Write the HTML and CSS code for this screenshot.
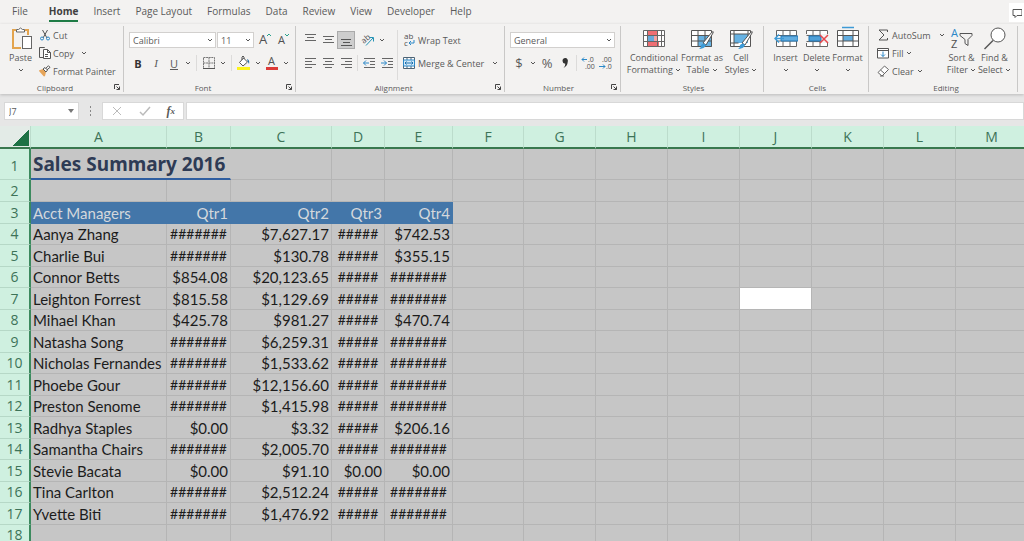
FILE: index.html
```html
<!DOCTYPE html>
<html lang="en">
<head>
  <meta charset="UTF-8" />
  <meta name="viewport" content="width=device-width, initial-scale=1.0"/>
  <title>Sales Summary 2016</title>
  <link rel="stylesheet" href="styles.css">
</head>
<body>

<!-- shared icons -->
<svg class="defs" aria-hidden="true">
  <symbol id="chev" viewBox="0 0 6 6"><path d="M1 2l2 2 2-2" fill="none" stroke="#555" stroke-width="1"/></symbol>
  <symbol id="launch" viewBox="0 0 8 8"><path d="M1.5 6V1.500H6M3.500 3.500l3 3M6.500 3.500v3h-3" fill="none" stroke="#444" stroke-width="1"/></symbol>
</svg>

<nav class="tabs">
  <a href="#" class="tab tab-file">File</a>
  <a href="#" class="tab active">Home</a>
  <a href="#" class="tab">Insert</a>
  <a href="#" class="tab">Page Layout</a>
  <a href="#" class="tab">Formulas</a>
  <a href="#" class="tab">Data</a>
  <a href="#" class="tab">Review</a>
  <a href="#" class="tab">View</a>
  <a href="#" class="tab">Developer</a>
  <a href="#" class="tab">Help</a>
  <button class="btn-comments" aria-label="Comments">
    <svg width="10" height="10" viewBox="0 0 10 10"><path d="M1 1.500h9v6H5l-2 2v-2H1z" fill="none" stroke="#555"/></svg>
  </button>
</nav>

<div class="ribbon">
  <section class="group clipboard">
    <div class="tools">
      <button class="big">
        <svg width="24" height="24" viewBox="0 0 24 24">
          <path d="M7 4H4v18h8M16 4h3v5" fill="none" stroke="#e3a44e" stroke-width="2"/>
          <path d="M7.500 6V3.500h2q2-3 4 0h2V6z" fill="#fff" stroke="#666"/>
          <rect x="13.500" y="10.500" width="9" height="12" fill="#fff" stroke="#666"/>
        </svg>
        <span>Paste</span>
        <svg class="chev"><use href="#chev"/></svg>
      </button>
      <div class="stack">
        <button class="row">
          <svg width="12" height="12" viewBox="0 0 12 12">
            <path d="M3.500 1l4.500 8M8.500 1L4 9" fill="none" stroke="#555"/>
            <circle cx="3" cy="9.500" r="1.500" fill="none" stroke="#2b88c8"/><circle cx="9" cy="9.500" r="1.500" fill="none" stroke="#2b88c8"/>
          </svg>Cut
        </button>
        <button class="row">
          <svg width="12" height="12" viewBox="0 0 12 12">
            <path d="M4 10.500H.5v-10h5L6 1" fill="none" stroke="#555"/>
            <path d="M4.500 2.500h4l3 3v6h-7zM8.500 2.500v3h3M6 7.500h3M6 9.500h3" fill="#fff" stroke="#555"/>
          </svg>Copy<svg class="chev chev-far"><use href="#chev"/></svg>
        </button>
        <button class="row">
          <svg width="12" height="12" viewBox="0 0 12 12">
            <path d="M1 5l3-1 3 3-1 4q-1 1-2-.5L0 6q0-1 1-1z" fill="#e6a55a"/>
            <path d="M4 4l2-1.500L8.500 5 7 7zM6.500 3.500L9.500.8l1.500 1.500-3 2.500" fill="#fff" stroke="#555"/>
          </svg>Format Painter
        </button>
      </div>
    </div>
    <footer><span>Clipboard</span><button class="launch" aria-label="Clipboard options"><svg><use href="#launch"/></svg></button></footer>
  </section>

  <section class="group font">
    <div class="tools lines">
      <div class="line">
        <select class="sel-font" aria-label="Font"><option>Calibri</option></select>
        <select class="sel-size" aria-label="Font size"><option>11</option></select>
        <button class="ico" aria-label="Increase font size"><svg viewBox="0 0 18 18"><text x="3" y="13" class="glyph" font-size="13">A</text><path d="M11 5l2-2 2 2" fill="none" stroke="#26a08b"/></svg></button>
        <button class="ico" aria-label="Decrease font size"><svg viewBox="0 0 18 18"><text x="4" y="13" class="glyph" font-size="11">A</text><path d="M11 3l2 2 2-2" fill="none" stroke="#26a08b"/></svg></button>
      </div>
      <div class="line">
        <button class="ico bold">B</button>
        <button class="ico italic">I</button>
        <button class="ico underline">U</button>
        <button class="drop" aria-label="Underline style"><svg class="chev"><use href="#chev"/></svg></button>
        <i class="sep"></i>
        <button class="ico" aria-label="Borders"><svg viewBox="0 0 18 18"><path d="M3.500 3.500h11v11h-11zM9 3.500v11M3.500 9h11" fill="none" stroke="#777" stroke-dasharray="2 .6"/><path d="M3 14.500h12" stroke="#555"/></svg></button>
        <button class="drop" aria-label="Border style"><svg class="chev"><use href="#chev"/></svg></button>
        <i class="sep"></i>
        <button class="ico" aria-label="Fill colour"><svg viewBox="0 0 18 18"><path d="M4.500 8.500l4-4.500 4 4-4.500 4zM7 6V3q1-2 2 0v2" fill="#fff" stroke="#555"/><path d="M12 5q3 1 2 5l-1-2z" fill="#1f6fa5"/><path d="M2 13h13v3H2z" fill="#fcf41c"/></svg></button>
        <button class="drop" aria-label="Fill options"><svg class="chev"><use href="#chev"/></svg></button>
        <button class="ico" aria-label="Font colour"><svg viewBox="0 0 18 18"><text x="5" y="11" class="glyph" font-size="11">A</text><path d="M3 13h12v3H3z" fill="#dc3b38"/></svg></button>
        <button class="drop" aria-label="Font colour options"><svg class="chev"><use href="#chev"/></svg></button>
      </div>
    </div>
    <footer><span>Font</span><button class="launch" aria-label="Font options"><svg><use href="#launch"/></svg></button></footer>
  </section>

  <section class="group alignment">
    <div class="tools">
      <div class="lines">
        <div class="line">
          <button class="ico" aria-label="Top align"><svg viewBox="0 0 18 18"><path d="M4 3.500h11M6 6.500h7M4 9.500h11" stroke="#666"/></svg></button>
          <button class="ico" aria-label="Middle align"><svg viewBox="0 0 18 18"><path d="M4 5.500h11M6 8.500h7M4 11.500h11" stroke="#666"/></svg></button>
          <button class="ico pressed" aria-label="Bottom align"><svg viewBox="0 0 18 18"><path d="M4 8.500h10M6 11.500h7M4 14.500h11" stroke="#555"/></svg></button>
          <button class="ico orient" aria-label="Orientation"><svg viewBox="0 0 18 18"><text x="3" y="10" class="glyph" font-size="8" transform="rotate(-40 8 9)">ab</text><path d="M7 14.500L14 7M10.500 6.500h4v4" fill="none" stroke="#2593b5"/></svg></button>
          <button class="drop" aria-label="Orientation options"><svg class="chev"><use href="#chev"/></svg></button>
        </div>
        <div class="line">
          <button class="ico" aria-label="Align left"><svg viewBox="0 0 18 18"><path d="M4 4.500h11M4 7.500h7M4 10.500h11M4 13.500h7" stroke="#666"/></svg></button>
          <button class="ico" aria-label="Center"><svg viewBox="0 0 18 18"><path d="M4 4.500h11M6 7.500h7M4 10.500h11M6 13.500h7" stroke="#666"/></svg></button>
          <button class="ico" aria-label="Align right"><svg viewBox="0 0 18 18"><path d="M4 4.500h11M8 7.500h7M4 10.500h11M8 13.500h7" stroke="#666"/></svg></button>
          <i class="sep thin"></i>
          <button class="ico" aria-label="Decrease indent"><svg viewBox="0 0 18 18"><path d="M4 4.500h11M10 7.500h5M10 10.500h5M4 13.500h11" stroke="#666"/><path d="M3.500 9H9M6 6.500L3.500 9 6 11.500" fill="none" stroke="#2b88c8"/></svg></button>
          <button class="ico" aria-label="Increase indent"><svg viewBox="0 0 18 18"><path d="M4 4.500h11M10 7.500h5M10 10.500h5M4 13.500h11" stroke="#666"/><path d="M3 9h5.500M6 6.500L8.500 9 6 11.500" fill="none" stroke="#2b88c8"/></svg></button>
        </div>
      </div>
      <i class="sep tall"></i>
      <div class="lines">
        <div class="line">
          <button class="row"><svg width="12" height="14" viewBox="0 0 12 14"><text x="1" y="6" class="glyph" font-size="8">ab</text><text x="1" y="13" class="glyph" font-size="8">c</text><path d="M11 7v3H6M8 8l-2 2 2 2" fill="none" stroke="#2b88c8"/></svg>Wrap Text</button>
        </div>
        <div class="line">
          <button class="row"><svg width="12" height="12" viewBox="0 0 12 12"><path d="M.5.500h11v11H.5zM4 .5V3M8 .5V3M4 9v3M8 9v3" fill="#fff" stroke="#4c6477"/><path d="M.5 3h11v6H.5z" fill="#d4eaf8" stroke="#2b88c8"/><path d="M2 6h8M3.500 4.500L2 6l1.500 1.500M8.500 4.500L10 6 8.500 7.500" fill="none" stroke="#1a71b0"/></svg>Merge &amp; Center<svg class="chev chev-far"><use href="#chev"/></svg></button>
        </div>
      </div>
    </div>
    <footer><span>Alignment</span><button class="launch" aria-label="Alignment options"><svg><use href="#launch"/></svg></button></footer>
  </section>

  <section class="group number">
    <div class="tools lines">
      <div class="line">
        <select class="sel-number" aria-label="Number format"><option>General</option></select>
      </div>
      <div class="line">
        <button class="ico symbol">$</button>
        <button class="drop" aria-label="Currency"><svg class="chev"><use href="#chev"/></svg></button>
        <button class="ico symbol">%</button>
        <button class="ico" aria-label="Comma style"><svg viewBox="0 0 18 18"><path d="M6.500 7a2.700 2.700 0 1 1 5.300.5Q11.500 12 7.500 14q2-2.200 1.800-4.200Q6.600 9.500 6.500 7z" fill="#333"/></svg></button>
        <i class="sep thin"></i>
        <button class="ico" aria-label="Increase decimal"><svg viewBox="0 0 18 18"><text x="9" y="8" class="glyph" font-size="7">.0</text><text x="6" y="15" class="glyph" font-size="7">.00</text><path d="M3 5.500h5M5 3.500l-2 2 2 2" fill="none" stroke="#2b88c8"/></svg></button>
        <button class="ico" aria-label="Decrease decimal"><svg viewBox="0 0 18 18"><text x="5" y="8" class="glyph" font-size="7">.00</text><text x="9" y="15" class="glyph" font-size="7">.0</text><path d="M2 12.500h6M6 10.500l2 2-2 2" fill="none" stroke="#2b88c8"/></svg></button>
      </div>
    </div>
    <footer><span>Number</span><button class="launch" aria-label="Number options"><svg><use href="#launch"/></svg></button></footer>
  </section>

  <section class="group styles">
    <div class="tools">
      <button class="big wide">
        <svg width="24" height="24" viewBox="0 0 24 24">
          <path d="M1.500 4.500h21v16h-21z" fill="#fff"/>
          <path d="M5 4h10v6H5zM5 15h12v6H5z" fill="#ee6e73"/><path d="M5 10h7v5H5z" fill="#66aadc"/><path d="M12 10h3v5h-3z" fill="#f5a3a3"/>
          <path d="M1.500 4.500h21v16h-21zM5.500 4.500v16M15.500 4.500v16M19.500 4.500v16M1.500 9.500h21M1.500 15.500h21" fill="none" stroke="#666"/>
        </svg>
        <span>Conditional</span><span>Formatting <svg class="chev"><use href="#chev"/></svg></span>
      </button>
      <button class="big">
        <svg width="24" height="24" viewBox="0 0 24 24">
          <path d="M1.500 4.500h20v16h-20z" fill="#fff"/><path d="M8 10h14v11H8z" fill="#66b2e3"/>
          <path d="M1.500 4.500h20v16h-20zM8 4.500v16M15 4.500v16M1.500 9.500h20M1.500 15h20" fill="none" stroke="#555"/>
          <path d="M13 17L22 6q2-1 1 1l-7 12z" fill="#fff" stroke="#555"/><path d="M8 23q3 0 3-4 3-3 5 0-1 4-8 4z" fill="#3d9ad6"/>
        </svg>
        <span>Format as</span><span>Table <svg class="chev"><use href="#chev"/></svg></span>
      </button>
      <button class="big cell-styles">
        <svg width="24" height="24" viewBox="0 0 24 24">
          <path d="M1.500 4.500h20v16h-20z" fill="#fff"/><path d="M5 8h14v9H5z" fill="#66b2e3"/>
          <path d="M1.500 4.500h20v16h-20zM5 4.500v16M19 4.500v6M1.500 8h20M1.500 17h8" fill="none" stroke="#555"/>
          <path d="M13 17L22 6q2-1 1 1l-7 12z" fill="#fff" stroke="#555"/><path d="M8 23q3 0 3-4 3-3 5 0-1 4-8 4z" fill="#3d9ad6"/>
        </svg>
        <span>Cell</span><span>Styles <svg class="chev"><use href="#chev"/></svg></span>
      </button>
    </div>
    <footer><span>Styles</span></footer>
  </section>

  <section class="group cells">
    <div class="tools">
      <button class="big">
        <svg width="24" height="24" viewBox="0 0 24 24">
          <path d="M2.500 4.500h20v16h-20zM9 4.500v16M16 4.500v16M2.500 9.500h20M2.500 15h20" fill="#fff" stroke="#666"/>
          <path d="M7 10h17v5H7z" fill="#62ade0" stroke="#2376b4"/><path d="M1 12.500h9M5 8.500l-4 4 4 4" fill="none" stroke="#3d9ad6" stroke-width="1.500"/>
        </svg>
        <span>Insert</span><svg class="chev"><use href="#chev"/></svg>
      </button>
      <button class="big">
        <svg width="24" height="24" viewBox="0 0 24 24">
          <path d="M22.500 8V4.500h-21V8M22.500 17v3.500h-21V17M8 4.500v16M15 4.500v16M1.500 9.500h14M1.500 15.500h14" fill="#fff" stroke="#666"/>
          <path d="M4 10h12v5H4z" fill="#4fa0d8" stroke="#2376b4"/><path d="M15 9l8 8M23 9l-8 8" stroke="#e8474c" stroke-width="1.500"/>
        </svg>
        <span>Delete</span><svg class="chev"><use href="#chev"/></svg>
      </button>
      <button class="big">
        <svg width="24" height="24" viewBox="0 0 24 24">
          <path d="M6 1.500h12" stroke="#3d9ad6" stroke-width="1.500"/>
          <path d="M1.500 4.500h21v16h-21z" fill="#fff"/><path d="M7 10h10v5H7z" fill="#62ade0"/>
          <path d="M1.500 4.500h21v16h-21zM7 4.500v16M17 4.500v16M1.500 9.500h21M1.500 15h21" fill="none" stroke="#555"/>
        </svg>
        <span>Format</span><svg class="chev"><use href="#chev"/></svg>
      </button>
    </div>
    <footer><span>Cells</span></footer>
  </section>

  <section class="group editing">
    <div class="tools">
      <div class="stack">
        <button class="row"><svg width="12" height="12" viewBox="0 0 12 12"><path d="M10.500 3V1H2l5 5-5 5h8.500V9" fill="none" stroke="#555"/></svg>AutoSum<svg class="chev chev-far"><use href="#chev"/></svg></button>
        <button class="row"><svg width="12" height="12" viewBox="0 0 12 12"><path d="M.5 1.500h11v9.500H.5zM.5 3.500h11" fill="#fff" stroke="#555"/><path d="M6 4.500v5M4 7.500l2 2 2-2" fill="none" stroke="#2b88c8"/></svg>Fill<svg class="chev"><use href="#chev"/></svg></button>
        <button class="row"><svg width="12" height="12" viewBox="0 0 12 12"><path d="M1 7.500L7.500 1l4 3.500L5 11zM3.500 5l4 3.500M3 11h4" fill="#fff" stroke="#666"/></svg>Clear<svg class="chev"><use href="#chev"/></svg></button>
      </div>
      <button class="big">
        <svg width="24" height="24" viewBox="0 0 24 24">
          <text x="1" y="11" class="glyph blue" font-size="11">A</text><text x="1" y="22" class="glyph" font-size="11">Z</text>
          <path d="M10 7.500h12v2l-4 4v6l-3-2v-4l-5-4z" fill="none" stroke="#555"/>
        </svg>
        <span>Sort &amp;</span><span>Filter <svg class="chev"><use href="#chev"/></svg></span>
      </button>
      <button class="big">
        <svg width="24" height="24" viewBox="0 0 24 24"><circle cx="15" cy="9" r="7" fill="#fff" stroke="#555"/><path d="M10 14.500L1.500 23" stroke="#555" stroke-width="1.500"/></svg>
        <span>Find &amp;</span><span>Select <svg class="chev"><use href="#chev"/></svg></span>
      </button>
    </div>
    <footer><span>Editing</span></footer>
  </section>
</div>

<div class="formula-bar">
  <div class="name-box">
    <input type="text" value="J7" aria-label="Name box">
    <button class="name-drop" aria-label="Show names"><svg width="6" height="4" viewBox="0 0 6 4"><path d="M0 0h6L3 4z" fill="#777"/></svg></button>
  </div>
  <svg class="grip" width="3" height="12" viewBox="0 0 3 12"><path d="M1 1h1v2H1zM1 5h1v2H1zM1 9h1v2H1z" fill="#888"/></svg>
  <div class="fx-buttons">
    <button aria-label="Cancel"><svg width="12" height="12" viewBox="0 0 12 12"><path d="M2 2l8 8M10 2l-8 8" stroke="#bbb"/></svg></button>
    <button aria-label="Enter"><svg width="12" height="12" viewBox="0 0 12 12"><path d="M1 7l3 3 7-8" fill="none" stroke="#bbb" stroke-width="1.500"/></svg></button>
    <button class="fx">f<sub>x</sub></button>
  </div>
  <input type="text" class="formula" aria-label="Formula">
</div>

<main class="sheet">
  <table>
    <colgroup id="cols"></colgroup>
    <thead><tr id="letters"></tr></thead>
    <tbody id="grid"></tbody>
  </table>
</main>

<script>
  const letters = 'ABCDEFGHIJKLM'.split('');
  // columns that are too narrow for their number
  const W = '#######', N = '#####';
  const rows = [
    ['Sales Summary 2016'],
    [],
    ['Acct Managers', 'Qtr1', 'Qtr2', 'Qtr3', 'Qtr4'],
    ['Aanya Zhang', W, '$7,627.17', N, '$742.53'],
    ['Charlie Bui', W, '$130.78', N, '$355.15'],
    ['Connor Betts', '$854.08', '$20,123.65', N, W],
    ['Leighton Forrest', '$815.58', '$1,129.69', N, W],
    ['Mihael Khan', '$425.78', '$981.27', N, '$470.74'],
    ['Natasha Song', W, '$6,259.31', N, W],
    ['Nicholas Fernandes', W, '$1,533.62', N, W],
    ['Phoebe Gour', W, '$12,156.60', N, W],
    ['Preston Senome', W, '$1,415.98', N, W],
    ['Radhya Staples', '$0.00', '$3.32', N, '$206.16'],
    ['Samantha Chairs', W, '$2,005.70', N, W],
    ['Stevie Bacata', '$0.00', '$91.10', '$0.00', '$0.00'],
    ['Tina Carlton', W, '$2,512.24', N, W],
    ['Yvette Biti', W, '$1,476.92', N, W],
    []
  ];

  let cols = '<col class="col-num">', head = '<th class="corner"></th>';
  letters.forEach(l => {
    cols += `<col class="col-${l.toLowerCase()}">`;
    head += `<th scope="col">${l}</th>`;
  });
  document.getElementById('cols').innerHTML = cols;
  document.getElementById('letters').innerHTML = head;

  const grid = document.getElementById('grid');
  rows.forEach((row, r) => {
    const tr = document.createElement('tr');
    if (r === 0) tr.className = 'title-row';
    if (r === 2) tr.className = 'head-row';
    let html = `<th scope="row">${r + 1}</th>`;
    letters.forEach((l, c) => {
      if (r === 0 && c === 0) { html += `<td colspan="2" class="title">${row[0]}</td>`; return; }
      if (r === 0 && c === 1) return;
      const text = row[c] || '';
      let cls = '';
      if (text[0] === '#') cls = ' class="hashes"';
      if (l === 'J' && r === 6) cls = ' class="active"';
      html += `<td${cls}>${text}</td>`;
    });
    tr.innerHTML = html;
    grid.appendChild(tr);
  });
</script>

</body>
</html>
```
FILE: styles.css
```css
* { box-sizing: border-box; margin: 0; padding: 0; }
body {
  font-family: "Open Sans", "Noto Sans", sans-serif;
  font-size: 9px;
  color: #5a5a5a;
  background: #e6e6e6;
  height: 100vh;
  display: flex;
  flex-direction: column;
  overflow: hidden;
}
button, input, select { font: inherit; color: inherit; border: none; background: none; }
button { display: flex; align-items: center; justify-content: center; white-space: nowrap; }
svg { display: block; flex: none; }
.defs { width: 0; height: 0; position: absolute; }
.chev { width: 6px; height: 6px; display: inline-block; }
.glyph { fill: #505050; }
.glyph.blue { fill: #2b88c8; }

/* tabs */
.tabs {
  display: flex;
  align-items: stretch;
  height: 24px;
  padding: 3px 0 2px 5px;
  background: #f3f2f1;
  font-size: 10px;
}
.tab {
  margin: 0 8px 0 7px;
  line-height: 17px;
  color: #5a5a5a;
  text-decoration: none;
}
.tab-file { margin-right: 14px; }
.tab.active {
  font-weight: bold;
  color: #404040;
  border-bottom: 2px solid #1e7b45;
}
.btn-comments {
  margin-left: auto;
  width: 15px;
  background: #fff;
}

/* ribbon */
.ribbon {
  display: flex;
  height: 70px;
  padding: 2px 0 0;
  background: #f3f2f1;
  box-shadow: 0 1px 3px #bbb;
  z-index: 1;
}
.group {
  display: flex;
  flex-direction: column;
  flex: none;
  height: 66px;
  padding: 0 2px 0 5px;
  border-right: 1px solid #c9c8c7;
}
.clipboard { width: 124px; }
.font { width: 172px; }
.alignment { width: 209px; }
.number { width: 116px; }
.styles { width: 143px; }
.cells { width: 105px; }
.editing { width: 149px; padding-left: 8px; }
.tools { display: flex; flex: 1; }
.lines { display: flex; flex-direction: column; gap: 5px; padding-top: 5px; }
.line { display: flex; align-items: center; height: 18px; }
.stack { display: flex; flex-direction: column; align-items: flex-start; }
.row { height: 17px; gap: 3px; }
.chev-far { margin-left: 5px; }
.big {
  flex-direction: column;
  justify-content: flex-start;
  width: 31px;
  line-height: 12px;
}
.big > svg:first-child { margin-bottom: 2px; }
.big > .chev { margin-top: 3px; }
.clipboard .big { margin-right: 3px; }
.clipboard .row { height: 18px; gap: 2px; }
.styles .big { width: 44px; }
.styles .big.wide { width: 52px; }
.styles .big.cell-styles { width: 34px; }
.styles .tools { padding-left: 2px; }
.cells .tools { padding-left: 1px; }
.editing .big { width: 33px; }
.editing .stack { width: 68px; }
.editing .row { height: 18px; }
.ico { width: 18px; height: 18px; font-size: 11px; }
.ico svg { width: 18px; height: 18px; }
.drop { width: 10px; height: 18px; }
.bold { font-weight: bold; color: #333; }
.italic { font-style: italic; font-family: "Liberation Serif", serif; }
.underline { text-decoration: underline; }
.symbol { font-size: 13px; }
.pressed { background: #cdcdcd; border: 1px solid #aaa; }
.orient { margin-left: 4px; }
.sep { width: 1px; height: 16px; margin: 0 3px; background: #dcdbda; }
.sep.thin { margin: 0 2px; }
.sep.tall { height: 50px; margin: 4px 5px 0 1px; }

select {
  appearance: none;
  height: 16px;
  padding: 0 3px;
  border: 1px solid #d2d0ce;
  background: #fff url("data:image/svg+xml,%3Csvg xmlns='http://www.w3.org/2000/svg' width='6' height='6'%3E%3Cpath d='M1 2l2 2 2-2' fill='none' stroke='%23555'/%3E%3C/svg%3E") no-repeat right 2px center;
}
.sel-font { width: 87px; margin-right: 1px; }
.sel-size { width: 37px; margin-right: 2px; }
.sel-number { width: 105px; }

footer {
  display: flex;
  align-items: center;
  height: 10px;
  font-size: 8px;
}
footer span { flex: 1; text-align: center; }
.font footer span, .alignment footer span, .clipboard footer span { padding-right: 8px; }
.number footer span { padding-right: 3px; }
.launch, .launch svg { width: 8px; height: 8px; }

/* formula bar */
.formula-bar {
  display: flex;
  align-items: center;
  height: 32px;
  padding: 2px 0 0 4px;
}
.name-box {
  display: flex;
  width: 75px;
  height: 18px;
  padding: 0 4px;
  background: #fff;
  border: 1px solid #d8d8d8;
}
.name-box input { flex: 1; min-width: 0; }
.grip { margin: 0 10px; }
.fx-buttons {
  display: flex;
  justify-content: space-around;
  width: 82px;
  height: 18px;
  background: #fff;
  border: 1px solid #d8d8d8;
}
.fx { font: italic bold 12px "Liberation Serif", serif; }
.fx sub { font-size: 9px; }
.formula {
  flex: 1;
  height: 18px;
  margin-left: 2px;
  background: #fff;
  border: 1px solid #d8d8d8;
}

/* sheet */
.sheet { flex: 1; overflow: hidden; background: #c6c6c6; }
table {
  table-layout: fixed;
  width: 100%;
  min-width: 1028px;
  border-collapse: separate;
  border-spacing: 0;
  font-family: Lato, "Noto Sans", sans-serif;
  font-size: 15px;
  line-height: 20px;
}
col { width: 72px; }
.col-num { width: 31px; }
.col-a { width: 136px; }
.col-b { width: 64px; }
.col-c { width: 101px; }
.col-d { width: 53px; }
.col-e { width: 68px; }
.col-f { width: 71px; }
.col-m { width: auto; }
th {
  font-family: "Open Sans", "Noto Sans", sans-serif;
  font-size: 14px;
  font-weight: normal;
  color: #3d7358;
  background: #cff0e0;
}
thead th {
  height: 23px;
  padding-top: 1px;
  border-right: 1px solid #bcdccc;
  border-bottom: 2px solid #39784f;
}
.corner {
  background: linear-gradient(135deg, #e3ebe7 50%, #1e7145 50%) no-repeat right 1px bottom 1px / 17px 17px, #e3ebe7;
}
tbody th {
  border-right: 2px solid #3c8a5e;
  border-bottom: 1px solid #b6d8c7;
}
td {
  height: 22px;
  padding: 0 2px;
  color: #1c1c1c;
  text-align: right;
  white-space: nowrap;
  border-right: 1px solid #b5b5b5;
  border-bottom: 1px solid #b5b5b5;
}
tbody tr:nth-child(n+4):nth-child(even) td { height: 21px; }
td:nth-child(2) { text-align: left; }
.hashes { font-size: 14px; text-align: center; }
.title-row th { padding-top: 3px; }
.title-row td { height: 31px; }
.title-row .title {
  padding-top: 1px;
  font-family: "Noto Sans", sans-serif;
  font-size: 19px;
  font-weight: bold;
  color: #2e3b55;
  border-bottom: 2px solid #2f5ea0;
  border-right-color: transparent;
}
.head-row td:nth-child(-n+6) {
  background: #4376a9;
  border-color: #4376a9;
  color: #d4d8dc;
}
td.active { background: #fff; }
```
